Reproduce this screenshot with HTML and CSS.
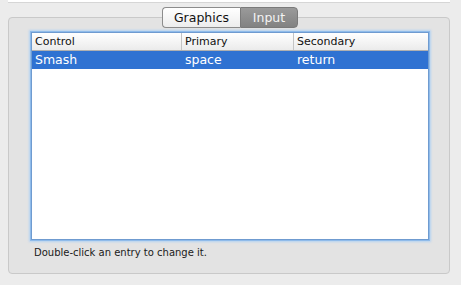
FILE: index.html
```html
<!DOCTYPE html>
<html lang="en">
<head>
    <meta charset="UTF-8">
    <title>Preferences</title>
    <link rel="stylesheet" href="styles.css">
</head>
<body>
    <div class="tira"></div>
    <div class="grupo">
        <div class="pestanas">
            <button class="pestana">Graphics</button>
            <button class="pestana activa">Input</button>
        </div>
        <div class="tabla">
            <div class="cabecera">
                <div class="col c1">Control</div>
                <div class="col c2">Primary</div>
                <div class="col c3">Secondary</div>
            </div>
            <div class="fila seleccionada">
                <div class="col c1">Smash</div>
                <div class="col c2">space</div>
                <div class="col c3">return</div>
            </div>
        </div>
        <p class="ayuda">Double-click an entry to change it.</p>
    </div>
</body>
</html>
```

FILE: styles.css
```css
body{
    margin: 0;
    background-color: #ececec;
    font-family: "DejaVu Sans", sans-serif;
    height: 285px;
    overflow: hidden;
}
.tira{
    margin: 0 11px 0 8px;
    height: 2px;
    background-color: #fff;
    border-bottom: 1px solid #d6d6d6;
}
.grupo{
    margin: 14px 11px 0 8px;
    height: 255px;
    background-color: #e3e3e3;
    border: 1px solid #c9c9c9;
    border-radius: 4px;
    display: flex;
    flex-direction: column;
}
.pestanas{
    display: flex;
    justify-content: center;
    margin-top: -11px;
    padding-left: 2px;
}
.pestana{
    font-family: "DejaVu Sans", sans-serif;
    font-size: 12.5px;
    height: 21px;
    padding: 0;
    margin: 0;
    border: 1px solid #8c8c8c;
    background: linear-gradient(#ffffff, #ededed);
    color: #111;
    width: 78px;
    border-radius: 4px 0 0 4px;
    border-right: none;
}
.pestana.activa{
    width: 58px;
    background: linear-gradient(#9a9a9a, #828282);
    color: #f4f4f4;
    border-color: #7a7a7a;
    border-radius: 0 4px 4px 0;
    border-right: 1px solid #7a7a7a;
}
.tabla{
    margin: 4px 20px 0 22px;
    height: 206px;
    background-color: #fff;
    border: 1px solid #6f9bd0;
    box-shadow: 0 0 0 1px #8fbbea, 0 0 2px 2px #b5d3f2;
}
.cabecera{
    display: flex;
    height: 17px;
    background: linear-gradient(#ffffff, #ebebeb);
    border-bottom: 1px solid #b0b0b0;
    font-size: 11px;
    color: #111;
    line-height: 17px;
}
.fila{
    display: flex;
    height: 18px;
    line-height: 18px;
    font-size: 12.5px;
}
.seleccionada{
    background-color: #2f72d2;
    color: #fff;
}
.col{
    box-sizing: border-box;
    padding-left: 3px;
}
.c1{
    width: 149px;
}
.c2{
    width: 112px;
}
.c3{
    flex: 1;
}
.cabecera .c2, .cabecera .c3{
    border-left: 1px solid #c4c4c4;
}
.fila .c2, .fila .c3{
    padding-left: 4px;
}
.ayuda{
    margin: 7px 0 0 25px;
    font-size: 10px;
    line-height: 12px;
    color: #1a1a1a;
}
```
